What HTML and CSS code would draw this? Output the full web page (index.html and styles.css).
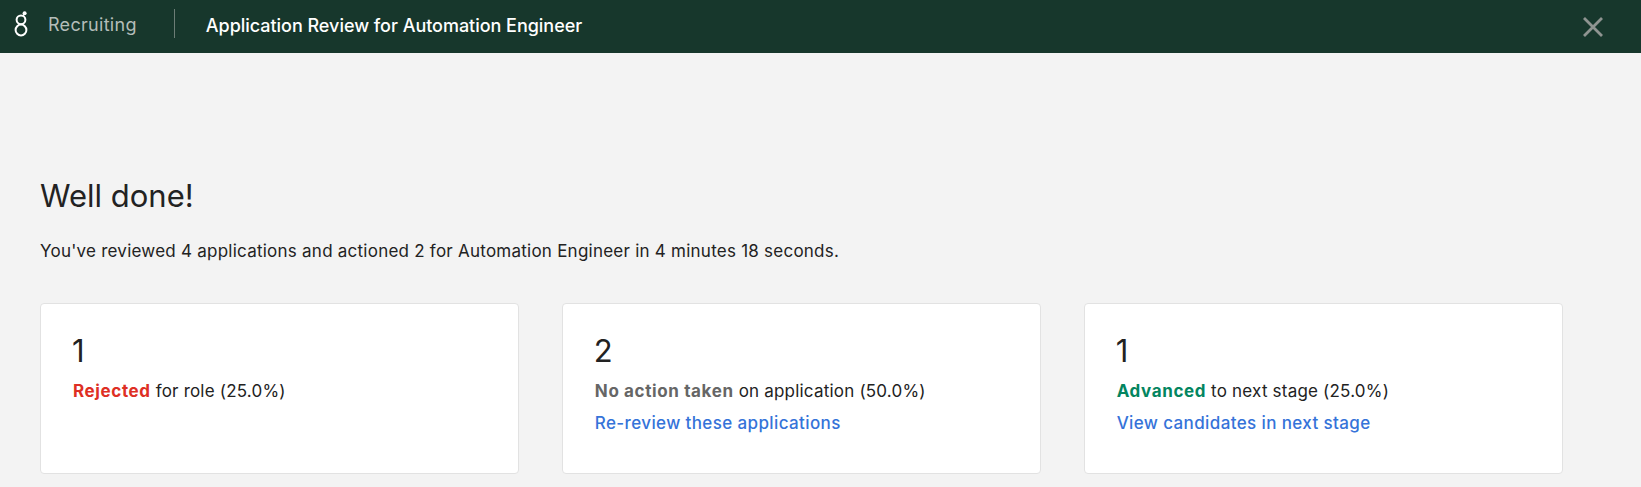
FILE: index.html
```html
<!DOCTYPE html>
<html lang="en">

<head>
    <meta charset="UTF-8">
    <title>Application Review</title>
    <link rel="stylesheet" href="styles.css">
</head>

<body>
    <header class="topbar">
        <svg class="logo" width="14" height="26" viewBox="0 0 14 26">
            <circle cx="7" cy="19" r="5.4" fill="none" stroke="#fff" stroke-width="2"/>
            <circle cx="7" cy="8.8" r="4.4" fill="none" stroke="#fff" stroke-width="2"/>
            <circle cx="10.6" cy="2.2" r="2" fill="#fff"/>
            <path d="M10 3L9 5" stroke="#fff" stroke-width="1.6"/>
        </svg>
        <span class="product">Recruiting</span>
        <span class="divider"></span>
        <span class="title">Application Review for Automation Engineer</span>
        <svg class="close" width="20" height="20" viewBox="0 0 20 20">
            <path d="M1 1L19 19M19 1L1 19" stroke="#8f9491" stroke-width="2.8"/>
        </svg>
    </header>

    <main class="content">
        <h1>Well done!</h1>
        <p class="summary">You've reviewed 4 applications and actioned 2 for Automation Engineer in 4 minutes 18 seconds.</p>
        <div class="cards">
            <div class="card">
                <div class="count">1</div>
                <div class="line"><b class="rejected">Rejected</b> for role (25.0%)</div>
            </div>
            <div class="card">
                <div class="count">2</div>
                <div class="line"><b class="none">No action taken</b> on application (50.0%)</div>
                <a class="link" href="#">Re-review these applications</a>
            </div>
            <div class="card">
                <div class="count">1</div>
                <div class="line"><b class="advanced">Advanced</b> to next stage (25.0%)</div>
                <a class="link" href="#">View candidates in next stage</a>
            </div>
        </div>
    </main>
</body>

</html>
```

FILE: styles.css
```css
body {
    margin: 0;
    height: 487px;
    overflow: hidden;
    background-color: #f3f3f3;
    color: #222;
    font-family: Inter, "Liberation Sans", sans-serif;
}

.topbar {
    height: 53px;
    display: flex;
    align-items: center;
    background-color: #17372c;
    padding: 0 38px 0 14px;
}

.logo {
    margin-right: 20px;
    margin-bottom: 6px;
}

.product {
    font-size: 18px;
    letter-spacing: 0.3px;
    color: #b4bdb9;
    padding-bottom: 4px;
}

.divider {
    width: 1px;
    height: 29px;
    background-color: #6c7d76;
    margin: 0 31px 6px 37px;
}

.title {
    font-size: 18px;
    font-weight: 500;
    letter-spacing: -0.03px;
    color: #fff;
    padding-bottom: 3px;
}

.close {
    margin-left: auto;
}

.content {
    padding: 123px 78px 0 40px;
}

h1 {
    margin: 0;
    font-size: 31px;
    line-height: 40px;
    font-weight: 400;
}

.summary {
    margin: 23px 0 0;
    font-size: 17px;
    letter-spacing: 0.24px;
    line-height: 24px;
}

.cards {
    display: flex;
    gap: 42.5px;
    margin-top: 40px;
}

.card {
    width: 480px;
    height: 171px;
    box-sizing: border-box;
    background-color: #fff;
    border: 1px solid #e2e2e2;
    border-radius: 4px;
    padding: 27px 31px 29px 32px;
}

.count {
    font-size: 31px;
    line-height: 40px;
    margin-left: -1px;
}

.line {
    margin-top: 8px;
    font-size: 17px;
    letter-spacing: 0.2px;
    line-height: 24px;
}

.line b {
    font-weight: 700;
    letter-spacing: 0.62px;
}

.rejected {
    color: #de2f24;
}

.none {
    color: #666;
}

.advanced {
    color: #038560;
}

.link {
    display: block;
    margin-top: 8px;
    font-size: 17px;
    font-weight: 500;
    letter-spacing: 0.38px;
    line-height: 24px;
    color: #3573d9;
    text-decoration: none;
}
```
